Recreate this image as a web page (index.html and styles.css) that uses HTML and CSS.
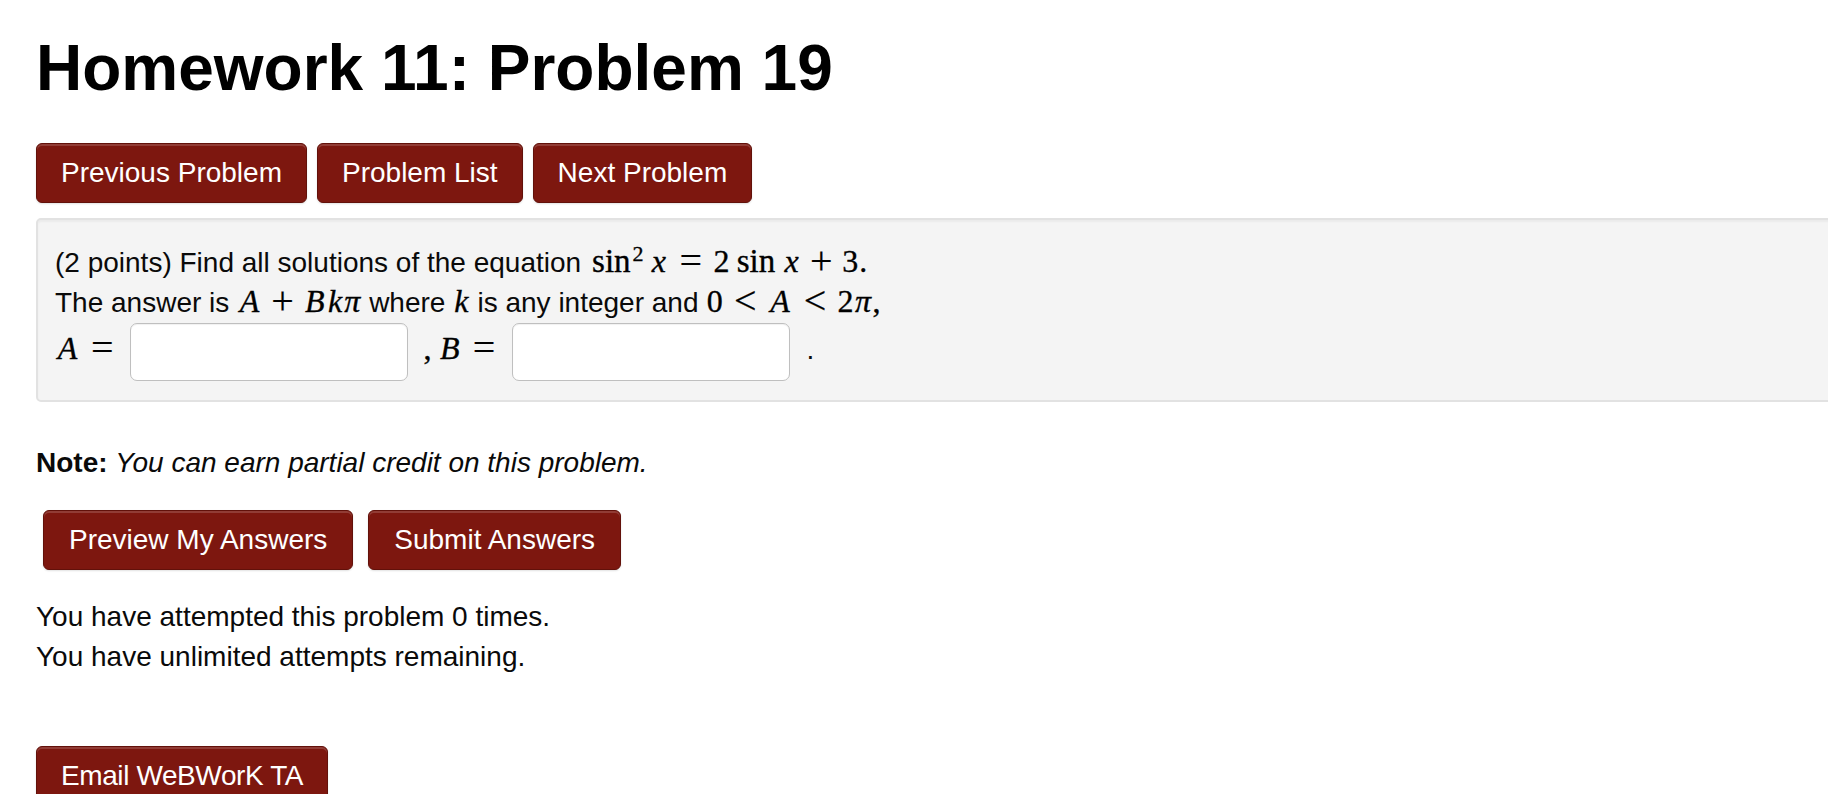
FILE: index.html
```html
<!DOCTYPE html>
<html lang="en">
<head>
<meta charset="utf-8">
<title>Homework 11: Problem 19</title>
<link rel="stylesheet" href="styles.css">
</head>
<body>
<main class="page">
  <h1 class="title">Homework 11: Problem 19</h1>

  <nav class="nav">
    <button class="btn" type="button">Previous Problem</button>
    <button class="btn" type="button">Problem List</button>
    <button class="btn" type="button">Next Problem</button>
  </nav>

  <div class="well">
    <div class="line">(2 points) Find all solutions of the equation <span class="math m1"><span class="t fn">sin</span><span class="t sup">2</span><span class="t it wx s1">x</span><span class="t op s3">=</span><span class="t dg s3">2</span><span class="t fn s1">sin</span><span class="t it wx s1">x</span><span class="t op s2">+</span><span class="t dg s2">3</span><span class="t pu">.</span></span></div>
    <div class="line">The answer is <span class="math"><span class="t it wA">A</span><span class="t op s2">+</span><span class="t it wB s2">B</span><span class="t it wk">k</span><span class="t it wpi">π</span></span> where <span class="math"><span class="t it wk">k</span></span> is any integer and <span class="math"><span class="t dg">0</span><span class="t op s3">&lt;</span><span class="t it wA s3">A</span><span class="t op s3">&lt;</span><span class="t dg s3">2</span><span class="t it wpi">π</span><span class="t pu">,</span></span></div>
    <div class="line"><span class="math"><span class="t it wA">A</span><span class="t op s3">=</span></span> <input class="answer" type="text" aria-label="A"> <span class="math"><span class="t pu">,</span><span class="t it wB s1">B</span><span class="t op s3">=</span></span> <input class="answer" type="text" aria-label="B"> <span class="end">.</span></div>
  </div>

  <p class="note"><b>Note:</b> <i>You can earn partial credit on this problem.</i></p>

  <div class="actions">
    <button class="btn" type="button">Preview My Answers</button>
    <button class="btn" type="button">Submit Answers</button>
  </div>

  <div class="attempts">
    <div>You have attempted this problem 0 times.</div>
    <div>You have unlimited attempts remaining.</div>
  </div>

  <div class="email">
    <button class="btn btn-tight" type="button">Email WeBWorK TA</button>
  </div>
</main>
</body>
</html>
```

FILE: styles.css
```css
html {
  margin: 0;
  background: #ffffff;
}

body {
  margin: 0;
  overflow-x: hidden;
  background: #ffffff;
  color: #0a0a0a;
  font-family: "Liberation Sans", Arial, Helvetica, sans-serif;
  font-size: 28px;
  line-height: 40px;
}

.page {
  padding: 0 0 0 36px;
}

.title {
  margin: 28px 0 0;
  font-size: 64px;
  line-height: 80px;
  font-weight: 700;
  color: #000000;
}

.nav {
  display: flex;
  gap: 10px;
  margin-top: 35px;
}

.btn {
  font-family: "Liberation Sans", Arial, Helvetica, sans-serif;
  font-size: 28px;
  line-height: 40px;
  padding: 9px 24px;
  border: 1px solid #62110a;
  border-radius: 6px;
  background: #7d170f;
  color: #ffffff;
  cursor: pointer;
  box-shadow: inset 0 2px 0 rgba(255, 255, 255, 0.16), 0 1px 2px rgba(0, 0, 0, 0.12);
}

.btn-tight {
  letter-spacing: -0.4px;
}

.actions .btn {
  padding: 9px 25px;
}

.well {
  margin-top: 15px;
  margin-right: -80px;
  padding: 22px 17px 19px;
  background: #f4f4f4;
  border: 2px solid #e2e2e2;
  border-radius: 5px;
  box-shadow: inset 0 2px 2px rgba(0, 0, 0, 0.04);
}

.line {
  white-space: nowrap;
}

.math {
  font-family: "Liberation Serif", "Times New Roman", serif;
  white-space: nowrap;
  color: #000000;
}

.m1 {
  margin-left: 2px;
}

.t {
  display: inline-block;
  text-align: center;
  font-size: 32px;
  line-height: 24px;
  -webkit-text-stroke: 0.35px currentColor;
}

.it {
  font-style: italic;
}

.fn {
  width: 41px;
  font-size: 33px;
}

.sup {
  width: 12px;
  font-size: 22px;
  vertical-align: 11px;
}

.wx { width: 19px; }
.wA { width: 25px; }
.wB { width: 24px; }
.wk { width: 16.5px; }
.wpi { width: 18px; }
.dg { width: 16.75px; }
.pu { width: 9.3px; }

.op {
  width: 26px;
  font-size: 40px;
  vertical-align: -2px;
  -webkit-text-stroke: 0.2px currentColor;
}

.s1 { margin-left: 5.6px; }
.s2 { margin-left: 7.4px; }
.s3 { margin-left: 9.3px; }

.answer {
  box-sizing: border-box;
  width: 278px;
  height: 58px;
  margin: 0 7px;
  padding: 8px 12px;
  vertical-align: middle;
  font-family: "Liberation Sans", Arial, sans-serif;
  font-size: 28px;
  background: #ffffff;
  border: 1px solid #bfbfbf;
  border-radius: 7px;
  box-shadow: inset 0 1px 1px rgba(0, 0, 0, 0.06);
  outline: none;
}

.end {
  margin-left: 2px;
}

.note {
  margin: 41px 0 0;
}

.actions {
  display: flex;
  gap: 15px;
  margin: 27px 0 0 7px;
}

.attempts {
  margin-top: 27px;
}

.email {
  margin-top: 69px;
}
```
